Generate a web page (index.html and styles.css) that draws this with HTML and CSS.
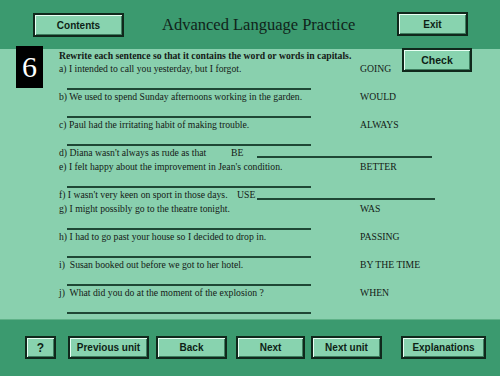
FILE: index.html
```html
<!doctype html>
<html lang="en">
<head>
    <meta charset="UTF-8">
    <title>Advanced Language Practice</title>
    <link rel="stylesheet" href="styles.css">
</head>
<body>

<div class="top">
    <button class="btn contents">Contents</button>
    <h1 class="title">Advanced Language Practice</h1>
    <button class="btn exit">Exit</button>
</div>

<div class="main">
    <div class="unit-col">
        <div class="unit">6</div>
    </div>

    <div class="exercise">
        <div class="task">Rewrite each sentence so that it contains the word or words in capitals.</div>

        <div class="row"><span>a) I intended to call you yesterday, but I forgot.</span><span class="key">GOING</span></div>
        <div class="answer"></div>

        <div class="row"><span>b) We used to spend Sunday afternoons working in the garden.</span><span class="key">WOULD</span></div>
        <div class="answer"></div>

        <div class="row"><span>c) Paul had the irritating habit of making trouble.</span><span class="key">ALWAYS</span></div>
        <div class="answer"></div>

        <div class="row inline"><span class="lead lead-d">d) Diana wasn't always as rude as that</span><span class="word word-d">BE</span><span class="blank blank-d"></span></div>

        <div class="row"><span>e) I felt happy about the improvement in Jean's condition.</span><span class="key">BETTER</span></div>
        <div class="answer"></div>

        <div class="row inline"><span class="lead lead-f">f) I wasn't very keen on sport in those days.</span><span class="word word-f">USE</span><span class="blank blank-f"></span></div>

        <div class="row"><span>g) I might possibly go to the theatre tonight.</span><span class="key">WAS</span></div>
        <div class="answer"></div>

        <div class="row"><span>h) I had to go past your house so I decided to drop in.</span><span class="key">PASSING</span></div>
        <div class="answer"></div>

        <div class="row"><span>i)&nbsp; Susan booked out before we got to her hotel.</span><span class="key">BY THE TIME</span></div>
        <div class="answer"></div>

        <div class="row"><span>j)&nbsp; What did you do at the moment of the explosion ?</span><span class="key">WHEN</span></div>
        <div class="answer"></div>
    </div>

    <div class="side">
        <button class="btn check">Check</button>
    </div>
</div>

<div class="bottom">
    <button class="btn help">?</button>
    <button class="btn prev">Previous unit</button>
    <button class="btn back">Back</button>
    <button class="btn next">Next</button>
    <button class="btn next-unit">Next unit</button>
    <button class="btn explain">Explanations</button>
</div>

</body>
</html>
```

FILE: styles.css
```css
body {
    margin: 0;
    width: 500px;
    height: 376px;
    overflow: hidden;
    font-family: "Liberation Serif", "Times New Roman", serif;
    color: #141a16;
    background: #3b9a6f;
}

.btn {
    display: flex;
    align-items: center;
    justify-content: center;
    padding: 0;
    font-family: "Liberation Sans", Arial, sans-serif;
    font-weight: bold;
    font-size: 10px;
    color: #0e1f16;
    background: #88d3af;
    border: 2px solid #10281c;
    box-shadow: inset 1px 1px 0 #e9fff4, inset -1px -1px 0 #3d7d5e;
}

/* header */
.top {
    height: 49px;
    display: flex;
    align-items: flex-start;
    background: #3b9a6f;
}
.contents {
    width: 91px;
    height: 24px;
    margin: 13px 0 0 33px;
}
.title {
    margin: 14px 0 0 38px;
    font-size: 16.5px;
    font-weight: normal;
    line-height: 22px;
    color: #10241a;
}
.exit {
    width: 71px;
    height: 24px;
    margin: 12px 32px 0 auto;
}

/* exercise */
.main {
    height: 270px;
    display: flex;
    background: #89d0ae;
    font-size: 9.7px;
}
.unit-col {
    width: 59px;
    flex: none;
}
.unit {
    width: 27px;
    height: 42px;
    margin: -3px 0 0 16px;
    background: #000;
    color: #fff;
    font-size: 30px;
    line-height: 42px;
    text-align: center;
}
.exercise {
    width: 343px;
    flex: none;
}
.task {
    font-weight: bold;
    line-height: 13px;
    white-space: nowrap;
}
.row {
    display: grid;
    grid-template-columns: 301px auto;
    height: 14px;
    line-height: 14px;
    white-space: nowrap;
}
.row.inline {
    display: flex;
}
.row.inline span {
    flex: none;
}
.lead-d {
    width: 172px;
}
.word-d {
    width: 26px;
}
.lead-f {
    width: 178px;
}
.word-f {
    width: 20px;
}
.blank {
    display: inline-block;
    align-self: baseline;
    height: 10px;
    border-bottom: 2px solid #1f4735;
}
.blank-d {
    width: 175px;
}
.blank-f {
    width: 178px;
}
.answer {
    width: 244px;
    height: 12px;
    margin-left: 8px;
    border-bottom: 2px solid #1f4735;
}
.side {
    flex: 1;
}
.check {
    width: 70px;
    height: 24px;
    margin: -1px 0 0 0;
    font-size: 10.5px;
}

/* footer */
.bottom {
    height: 41px;
    padding: 16px 0 0 25px;
    display: flex;
    align-items: flex-start;
    border-top: 1px solid #5fb288;
}
.bottom .btn {
    height: 23px;
}
.help {
    width: 31px;
    font-size: 12px;
}
.prev {
    width: 81px;
    margin-left: 12px;
}
.back {
    width: 71px;
    margin-left: 7px;
}
.next {
    width: 69px;
    margin-left: 9px;
}
.next-unit {
    width: 71px;
    margin-left: 6px;
}
.explain {
    width: 85px;
    margin-left: 19px;
}
```
